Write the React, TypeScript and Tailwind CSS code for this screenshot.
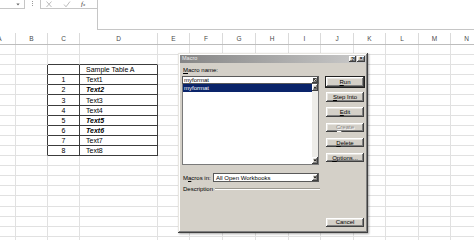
import React from 'react';

const COLS = ['A', 'B', 'C', 'D', 'E', 'F', 'G', 'H', 'I', 'J', 'K', 'L', 'M', 'N'];
const GRID = 'grid grid-cols-[32px_32px_32px_78px_32px_33px_33px_33px_32px_33px_32px_33px_32px_32px]';

const TABLE = [
  { n: '', text: 'Sample Table A', strong: false },
  { n: '1', text: 'Text1', strong: false },
  { n: '2', text: 'Text2', strong: true },
  { n: '3', text: 'Text3', strong: false },
  { n: '4', text: 'Text4', strong: false },
  { n: '5', text: 'Text5', strong: true },
  { n: '6', text: 'Text6', strong: true },
  { n: '7', text: 'Text7', strong: false },
  { n: '8', text: 'Text8', strong: false },
];

const ROWS = Array.from({ length: 20 }, (_, i) => i);

const raised =
  'bg-[#d4d0c8] shadow-[inset_-1px_-1px_#404040,inset_1px_1px_#ffffff,inset_-2px_-2px_#808080,inset_2px_2px_#e8e6e1]';

const WinButton: React.FC<{ label: string; mnemonic?: number; disabled?: boolean; primary?: boolean }> = ({
  label,
  mnemonic,
  disabled,
  primary,
}) => {
  const chars = label.split('');
  return (
    <div
      className={`h-[9.5px] flex items-center justify-center text-[6px] leading-none ${raised} ${
        primary ? 'outline outline-1 outline-[#202020]' : ''
      } ${disabled ? 'text-[#8c8c8c] [text-shadow:1px_1px_0_#ffffff]' : 'text-black'}`}
    >
      {chars.map((ch, i) => (
        <span key={i} className={i === mnemonic ? 'underline' : ''}>
          {ch === ' ' ? '\u00a0' : ch}
        </span>
      ))}
    </div>
  );
};

const Arrow: React.FC<{ dir: 'up' | 'down' }> = ({ dir }) => (
  <svg width="4" height="3" viewBox="0 0 4 3">
    {dir === 'up' ? <path d="M2 0.5 L3.6 2.5 L0.4 2.5 Z" fill="#000" /> : <path d="M0.4 0.5 L3.6 0.5 L2 2.5 Z" fill="#000" />}
  </svg>
);

const MacroDialog: React.FC = () => (
  <div className="absolute left-[178px] top-[53px] w-[190px] h-[180px] p-[2px] flex flex-col bg-[#d4d0c8] shadow-[inset_-1px_-1px_#404040,inset_1px_1px_#e8e6e1,inset_-2px_-2px_#808080,inset_2px_2px_#ffffff,1px_1px_2px_rgba(0,0,0,0.35)]">
    <div className="h-[8px] flex items-center justify-between pl-[2px] pr-[1px] bg-linear-to-r from-[#868686] to-[#cbcbcb]">
      <span className="text-[5.5px] leading-none text-[#ececec]">Macro</span>
      <div className="flex gap-[1px]">
        <div className={`w-[7px] h-[6.5px] flex items-center justify-center text-[5px] font-bold leading-none ${raised}`}>?</div>
        <div className={`w-[8px] h-[6.5px] flex items-center justify-center text-[5.5px] font-bold leading-none ${raised}`}>×</div>
      </div>
    </div>

    <div className="flex-1 flex flex-col px-[2px] pb-[4px]">
      <div className="flex gap-[7px] pt-[2px]">
        <div className="w-[137px] flex flex-col">
          <div className="h-[9px] flex items-center pl-[1px] text-[6px] leading-none">
            <span className="underline">M</span>acro name:
          </div>
          <div className="mt-[2px] h-[8px] flex bg-white border border-[#5a5a5a]">
            <div className="flex-1 flex items-center pl-[1px] text-[6px] leading-none">myformat</div>
            <div className={`w-[6px] flex items-center justify-center ${raised}`}>
              <svg width="4" height="4" viewBox="0 0 4 4">
                <path d="M0.5 0.5 L3 0.5 M0.5 0.5 L0.5 3 M0.5 0.5 L3.5 3.5" stroke="#000" strokeWidth="0.7" fill="none" />
              </svg>
            </div>
          </div>
          <div className="h-[81px] flex bg-white border border-[#7a7a7a] border-t-0">
            <div className="flex-1">
              <div className="h-[7.5px] flex items-center pl-[1px] bg-[#0a246a] text-white text-[6px] leading-none">myformat</div>
            </div>
            <div className="w-[6px] flex flex-col justify-between bg-[#eeede9]">
              <div className={`h-[7px] flex items-center justify-center ${raised}`}>
                <Arrow dir="up" />
              </div>
              <div className={`h-[7px] flex items-center justify-center ${raised}`}>
                <Arrow dir="down" />
              </div>
            </div>
          </div>
        </div>

        <div className="w-[38px] flex flex-col gap-[5.7px] pt-[12px]">
          <WinButton label="Run" mnemonic={0} primary />
          <WinButton label="Step Into" mnemonic={0} />
          <WinButton label="Edit" mnemonic={0} />
          <WinButton label="Create" mnemonic={0} disabled />
          <WinButton label="Delete" mnemonic={0} />
          <WinButton label="Options..." mnemonic={0} />
        </div>
      </div>

      <div className="w-[137px] mt-[8px] flex items-center">
        <div className="w-[31px] pl-[1px] text-[6px] leading-none">
          M<span className="underline">a</span>cros in:
        </div>
        <div className="flex-1 h-[9px] flex bg-white border border-[#5a5a5a]">
          <div className="flex-1 flex items-center pl-[2px] text-[6px] leading-none">All Open Workbooks</div>
          <div className={`w-[6px] flex items-center justify-center ${raised}`}>
            <Arrow dir="down" />
          </div>
        </div>
      </div>

      <div className="w-[138px] mt-[2px] h-[9px] flex items-center gap-[2px]">
        <span className="pl-[1px] text-[6px] leading-none">Description</span>
        <div className="flex-1 border-t border-t-[#9a978f] border-b border-b-white" />
      </div>

      <div className="mt-auto self-end w-[38px]">
        <WinButton label="Cancel" />
      </div>
    </div>
  </div>
);

const App: React.FC = () => {
  return (
    <div className="relative w-[474px] h-[240px] overflow-hidden bg-white text-black font-['Liberation_Sans',Arial,sans-serif]">
      {/* formula bar */}
      <div className="h-[33px] flex">
        <div className="w-[25px] h-[9px] flex items-center justify-end pr-[4px] border-r border-b border-[#c6c6c6]">
          <svg width="4" height="3" viewBox="0 0 4 3">
            <path d="M0.3 0.5 L3.7 0.5 L2 2.6 Z" fill="#6a6a6a" />
          </svg>
        </div>
        <div className="w-[15px] flex flex-col items-center gap-[1px] pt-[1px]">
          <div className="w-[1px] h-[1px] bg-[#9a9a9a]" />
          <div className="w-[1px] h-[1px] bg-[#9a9a9a]" />
          <div className="w-[1px] h-[1px] bg-[#9a9a9a]" />
        </div>
        <div className="w-[57px] h-[9px] flex items-center gap-[10px] pl-[4px] border-l border-b border-[#c6c6c6]">
          <svg width="8" height="7" viewBox="0 0 8 7">
            <path d="M1.5 0.5 L6.5 6 M6.5 0.5 L1.5 6" stroke="#b4b4b4" strokeWidth="0.9" fill="none" />
          </svg>
          <svg width="8" height="7" viewBox="0 0 8 7">
            <path d="M1 3.5 L3 5.8 L7 0.5" stroke="#b4b4b4" strokeWidth="0.9" fill="none" />
          </svg>
          <span className="w-[8px] text-[7px] leading-none italic text-[#3a3a3a] font-['Liberation_Serif',serif]">
            f<span className="text-[5px]">x</span>
          </span>
        </div>
        <div className="flex-1 h-[30px] border-l border-b border-[#c6c6c6]" />
      </div>

      {/* sheet */}
      <div className="ml-[-16px]">
        <div className={`${GRID} h-[12px] border-b border-b-[#bdbdbd]`}>
          {COLS.map((c) => (
            <div key={c} className="flex items-center justify-center border-r border-r-[#dadada] text-[6.5px] text-[#4a4a4a]">
              {c}
            </div>
          ))}
        </div>
        {ROWS.map((r) => {
          const entry = r >= 2 && r <= 10 ? TABLE[r - 2] : null;
          return (
            <div key={r} className={`${GRID} h-[10.1px]`}>
              {COLS.map((c, ci) => {
                const darkRight = entry && (ci === 1 || ci === 2 || ci === 3);
                const darkBottom = r >= 1 && r <= 10 && (ci === 2 || ci === 3);
                return (
                  <div
                    key={c}
                    className={`flex items-center border-r border-b text-[7px] leading-none ${
                      darkRight ? 'border-r-[#3c3c3c]' : 'border-r-[#e1e1e1]'
                    } ${darkBottom ? 'border-b-[#3c3c3c]' : 'border-b-[#e1e1e1]'} ${
                      ci === 2 ? 'justify-center' : 'pl-[6px]'
                    }`}
                  >
                    {entry && ci === 2 && entry.n}
                    {entry && ci === 3 && (
                      <span className={entry.strong ? 'font-bold italic' : ''}>{entry.text}</span>
                    )}
                  </div>
                );
              })}
            </div>
          );
        })}
      </div>

      <MacroDialog />
    </div>
  );
};

export default App;
